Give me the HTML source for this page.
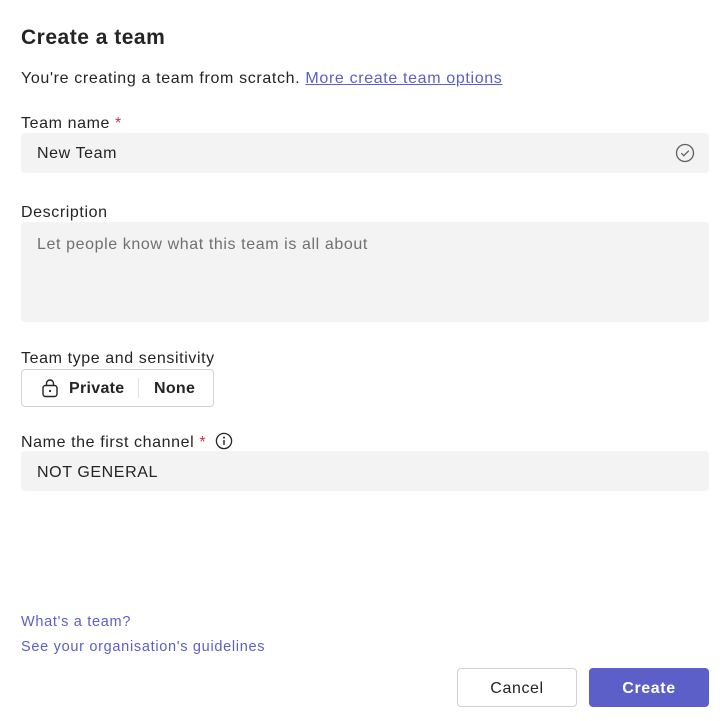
<!DOCTYPE html>
<html><head><style>
*{margin:0;padding:0;box-sizing:border-box}
body{width:724px;height:721px;background:#fff;font-family:"Liberation Sans",sans-serif;color:#242424;position:relative;overflow:hidden;letter-spacing:0.6px}
.a{position:absolute}
.lbl{font-size:16px;color:#242424}
.req{color:#c4314b}
.inp{position:absolute;left:21px;width:688px;background:#f3f3f3;border-radius:4px;font-size:16px;padding-left:16px}
a{color:#5b5fc7}
</style></head><body>
<div class="a" style="left:21px;top:26px;font-size:21px;font-weight:bold;letter-spacing:0.5px">Create a team</div>
<div class="a" style="left:21px;top:70px;font-size:16px;letter-spacing:0.65px">You're creating a team from scratch. <a style="text-decoration:underline">More create team options</a></div>
<div class="a lbl" style="left:21px;top:115px">Team name <span class="req">*</span></div>
<div class="inp" style="top:133px;height:40px;line-height:42px">New Team
<svg class="a" style="right:14px;top:10px" width="20" height="20" viewBox="0 0 20 20"><circle cx="10" cy="10" r="8.5" fill="none" stroke="#616161" stroke-width="1.3"/><path d="M6.3 10.2l2.5 2.5 5-5" fill="none" stroke="#616161" stroke-width="1.3"/></svg></div>
<div class="a lbl" style="left:21px;top:204px">Description</div>
<div class="inp" style="top:222px;height:100px;padding-top:14px;color:#707070">Let people know what this team is all about</div>
<div class="a lbl" style="left:21px;top:350px">Team type and sensitivity</div>
<div class="a" style="left:21px;top:369px;width:193px;height:38px;border:1px solid #d1d1d1;border-radius:4px;font-size:16px;font-weight:bold;line-height:38px;letter-spacing:0.3px">
<svg class="a" style="left:18px;top:8px" width="20" height="20" viewBox="0 0 20 20"><rect x="3" y="7.5" width="14" height="11" rx="2.5" fill="none" stroke="#242424" stroke-width="1.4"/><path d="M6.5 7.5V5.5a3.5 3.5 0 0 1 7 0v2" fill="none" stroke="#242424" stroke-width="1.4"/><circle cx="10" cy="13" r="1.1" fill="#242424"/></svg>
<span class="a" style="left:47px">Private</span>
<span class="a" style="left:116px;top:8px;width:1px;height:20px;background:#e0e0e0"></span>
<span class="a" style="left:132px">None</span></div>
<div class="a lbl" style="left:21px;top:432px">Name the first channel <span class="req">*</span>
<svg style="vertical-align:-3px;margin-left:4px" width="18" height="18" viewBox="0 0 18 18"><circle cx="9" cy="9" r="7.6" fill="none" stroke="#242424" stroke-width="1.3"/><circle cx="9" cy="5.6" r="1" fill="#242424"/><path d="M9 8v5" stroke="#242424" stroke-width="1.4"/></svg></div>
<div class="inp" style="top:451px;height:40px;line-height:43px">NOT GENERAL</div>
<div class="a" style="left:21px;top:614px;font-size:14.5px;color:#5b5fc7;letter-spacing:0.7px">What's a team?</div>
<div class="a" style="left:21px;top:639px;font-size:14.5px;color:#5b5fc7;letter-spacing:0.7px">See your organisation's guidelines</div>
<div class="a" style="left:457px;top:668px;width:120px;height:39px;border:1px solid #d1d1d1;border-radius:4px;text-align:center;line-height:40px;font-size:16px">Cancel</div>
<div class="a" style="left:589px;top:668px;width:120px;height:39px;background:#5b5fc7;border-radius:4px;text-align:center;line-height:41px;font-size:16px;font-weight:bold;color:#fff">Create</div>
</body></html>
